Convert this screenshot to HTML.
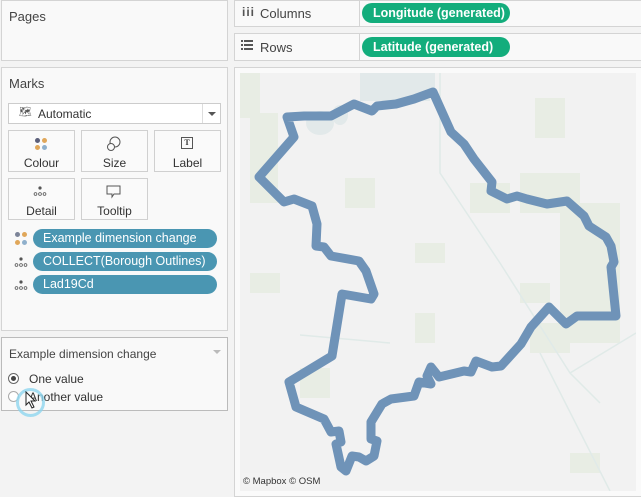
<!DOCTYPE html>
<html><head><meta charset="utf-8"><style>
*{box-sizing:border-box;margin:0;padding:0}
body{width:641px;height:496px;background:#f3f3f3;font-family:"Liberation Sans",sans-serif;font-size:12px;color:#333;position:relative;overflow:hidden}
.abs{position:absolute}
.box{position:absolute;border:1px solid #d4d4d4;background:#f9f9f9}
.btn{position:absolute;border:1px solid #d0d0d0;background:#fafafa;width:67px;height:42px;text-align:center;font-size:12px;color:#333}
.btn span{position:absolute;left:0;right:0;top:25px}
.pill{position:absolute;background:#4a96b2;color:#fff;border-radius:10px;height:19px;line-height:19px;padding-left:10px;font-size:12.5px}
.gp{position:absolute;background:#13ad7c;color:#fff;border-radius:10px;height:20px;line-height:20px;padding-left:11px;font-size:12.5px;font-weight:bold;width:148px}
.dot{position:absolute;width:5px;height:5px;border-radius:50%}
</style></head><body>
<div class="box" style="left:1px;top:0;width:227px;height:61px"><div class="abs" style="left:7px;top:8px;font-size:13px;color:#444">Pages</div></div>
<div class="box" style="left:1px;top:67px;width:227px;height:264px">
<div class="abs" style="left:7px;top:8px;font-size:13px;color:#444">Marks</div>
</div>
<div class="abs" style="left:8px;top:103px;width:213px;height:21px;border:1px solid #ccc;background:#fff"></div>
<div class="abs" style="left:202px;top:104px;width:1px;height:19px;background:#ddd"></div>
<div class="abs" style="left:208px;top:112px;width:0;height:0;border-left:4px solid transparent;border-right:4px solid transparent;border-top:4px solid #555"></div>
<div class="abs" style="left:19px;top:107px;font-size:10px;color:#555">🗺</div>
<div class="abs" style="left:38px;top:107px;color:#333">Automatic</div>
<div class="btn" style="left:8px;top:130px"><span>Colour</span></div>
<div class="dot" style="left:35px;top:138px;background:#5b5f7a"></div><div class="dot" style="left:42px;top:138px;background:#e0a75a"></div>
<div class="dot" style="left:35px;top:145px;background:#e0a75a"></div><div class="dot" style="left:42px;top:145px;background:#8fb0cc"></div>
<div class="btn" style="left:81px;top:130px"><span>Size</span></div>
<svg class="abs" style="left:106px;top:136px" width="16" height="16"><circle cx="9" cy="6" r="5" fill="none" stroke="#555"/><circle cx="5" cy="11" r="3.5" fill="#fafafa" stroke="#555"/></svg>
<div class="btn" style="left:154px;top:130px"><span>Label</span></div>
<div class="abs" style="left:181px;top:137px;width:12px;height:12px;border:1px solid #555;font-size:8px;line-height:10px;text-align:center;font-family:'Liberation Serif',serif;font-weight:bold">T</div>
<div class="btn" style="left:8px;top:178px"><span>Detail</span></div>
<div class="btn" style="left:81px;top:178px"><span>Tooltip</span></div>
<svg class="abs" style="left:106px;top:185px" width="16" height="14"><path d="M1 1H14V9H8L6 12V9H1Z" fill="none" stroke="#555"/></svg>
<svg class="abs" style="left:33px;top:185px" width="14" height="12"><circle cx="7" cy="3" r="1.6" fill="#555"/><circle cx="2.5" cy="9" r="1.4" fill="none" stroke="#555" stroke-width=".8"/><circle cx="7" cy="9" r="1.4" fill="none" stroke="#555" stroke-width=".8"/><circle cx="11.5" cy="9" r="1.4" fill="none" stroke="#555" stroke-width=".8"/></svg>
<div class="dot" style="left:15px;top:232px;background:#7c8498"></div><div class="dot" style="left:22px;top:232px;background:#e0a75a"></div>
<div class="dot" style="left:15px;top:240px;background:#e0a75a"></div><div class="dot" style="left:22px;top:240px;background:#8fb0cc"></div>
<svg class="abs" style="left:14px;top:256px" width="14" height="12"><circle cx="7" cy="3" r="1.6" fill="#555"/><circle cx="2.5" cy="9" r="1.4" fill="none" stroke="#555" stroke-width=".8"/><circle cx="7" cy="9" r="1.4" fill="none" stroke="#555" stroke-width=".8"/><circle cx="11.5" cy="9" r="1.4" fill="none" stroke="#555" stroke-width=".8"/></svg>
<svg class="abs" style="left:14px;top:279px" width="14" height="12"><circle cx="7" cy="3" r="1.6" fill="#555"/><circle cx="2.5" cy="9" r="1.4" fill="none" stroke="#555" stroke-width=".8"/><circle cx="7" cy="9" r="1.4" fill="none" stroke="#555" stroke-width=".8"/><circle cx="11.5" cy="9" r="1.4" fill="none" stroke="#555" stroke-width=".8"/></svg>
<div class="pill" style="left:33px;top:229px;width:184px">Example dimension change</div>
<div class="pill" style="left:33px;top:252px;width:184px">COLLECT(Borough Outlines)</div>
<div class="pill" style="left:33px;top:275px;width:184px">Lad19Cd</div>
<div class="box" style="left:1px;top:337px;width:227px;height:74px;border-color:#bbb">
<div class="abs" style="left:7px;top:9px;color:#444">Example dimension change</div>
<div class="abs" style="left:211px;top:12px;width:0;height:0;border-left:4px solid transparent;border-right:4px solid transparent;border-top:4px solid #bbb"></div>
</div>
<div class="abs" style="left:8px;top:373px;width:11px;height:11px;border:1px solid #666;border-radius:50%;background:#fff"></div>
<div class="abs" style="left:11px;top:376px;width:5px;height:5px;border-radius:50%;background:#444"></div>
<div class="abs" style="left:29px;top:372px;color:#333">One value</div>
<div class="abs" style="left:8px;top:391px;width:11px;height:11px;border:1px solid #aaa;border-radius:50%;background:#fff"></div>
<div class="abs" style="left:29px;top:390px;color:#333">Another value</div>
<div class="abs" style="left:16px;top:388px;width:29px;height:29px;border:3px solid #8fd6ef;border-radius:50%;opacity:.8"></div>
<svg class="abs" style="left:25px;top:391px" width="12" height="18"><path d="M1 1V14L4 11L7 17L9 16L6 10H10Z" fill="#fff" stroke="#222" stroke-width="1"/></svg>
<div class="box" style="left:234px;top:0;width:410px;height:27px;background:#f9f9f9"></div>
<div class="abs" style="left:359px;top:0;width:1px;height:26px;background:#d4d4d4"></div>
<div class="abs" style="left:242px;top:5px;font-weight:bold;color:#555;font-size:12px;letter-spacing:1px">iii</div>
<div class="abs" style="left:260px;top:6px;color:#444;font-size:13px">Columns</div>
<div class="gp" style="left:362px;top:3px">Longitude (generated)</div>
<div class="box" style="left:234px;top:33px;width:410px;height:28px;background:#f9f9f9"></div>
<div class="abs" style="left:359px;top:34px;width:1px;height:26px;background:#d4d4d4"></div>
<svg class="abs" style="left:241px;top:40px" width="12" height="10"><g fill="#555"><rect x="0" y="0" width="2" height="2"/><rect x="3" y="0" width="9" height="2"/><rect x="0" y="4" width="2" height="2"/><rect x="3" y="4" width="9" height="2"/><rect x="0" y="8" width="2" height="2"/><rect x="3" y="8" width="9" height="2"/></g></svg>
<div class="abs" style="left:260px;top:40px;color:#444;font-size:13px">Rows</div>
<div class="gp" style="left:362px;top:37px">Latitude (generated)</div>
<div class="box" style="left:234px;top:67px;width:410px;height:430px;background:#fafafa"></div>
<svg class="abs" style="left:240px;top:73px" width="396" height="418">
<rect width="396" height="418" fill="#f2f2f2"/>
<g fill="#e8ede4">
<rect x="10" y="40" width="28" height="90"/><rect x="0" y="0" width="20" height="45"/>
<rect x="105" y="105" width="30" height="30"/><rect x="295" y="25" width="30" height="40"/>
<rect x="280" y="100" width="60" height="40"/><rect x="320" y="130" width="60" height="140"/>
<rect x="230" y="110" width="40" height="30"/><rect x="175" y="170" width="30" height="20"/>
<rect x="280" y="210" width="30" height="20"/><rect x="175" y="240" width="20" height="30"/>
<rect x="290" y="250" width="40" height="30"/><rect x="330" y="380" width="30" height="20"/>
<rect x="60" y="295" width="30" height="30"/><rect x="10" y="200" width="30" height="20"/>
</g>
<g fill="#e2e9ea"><rect x="120" y="0" width="70" height="28"/><rect x="165" y="0" width="30" height="18"/><ellipse cx="80" cy="50" rx="14" ry="12"/><ellipse cx="100" cy="42" rx="8" ry="10"/></g>
<path d="M200 0V100L260 190L330 300L360 330M300 280L370 418M60 262L150 270M330 300L396 260" fill="none" stroke="#e0eae8" stroke-width="1.5"/>
<polygon transform="translate(-240,-73)" fill="none" stroke="#6f93b8" stroke-width="9" stroke-linejoin="round" points="433,92 414,99 396,104 377,106 372,111 354,104 331,116 304,116 287,117 294,137 259,177 284,202 294,199 312,206 317,224 316,246 324,247 331,256 359,261 366,271 374,294 371,299 342,294 332,356 289,382 296,407 324,419 331,432 339,431 341,442 336,444 341,467 346,471 352,456 359,457 366,461 374,456 377,441 371,439 371,422 382,404 391,399 414,396 419,382 431,384 427,376 431,367 439,377 464,371 471,372 476,361 492,367 501,366 521,344 531,327 549,307 566,324 577,316 616,316 611,267 614,262 611,246 606,237 589,226 584,216 567,201 547,204 527,199 517,196 507,199 491,191 492,182 474,159 464,144 451,132"/>
<rect x="2" y="400" width="78" height="14" fill="#f2f2f2" opacity=".8"/>
<text x="3" y="411" font-family="Liberation Sans" font-size="9.5" fill="#333">© Mapbox © OSM</text>
</svg>
</body></html>
